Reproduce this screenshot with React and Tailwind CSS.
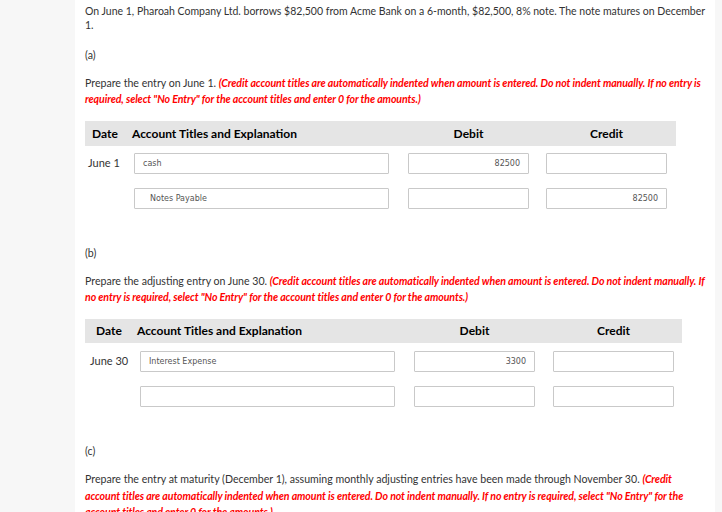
const prompt =
  '(Credit account titles are automatically indented when amount is entered. Do not indent manually. If no entry is required, select "No Entry" for the account titles and enter 0 for the amounts.)';

function Box({ value = "", width, align = "left", indent = false }) {
  return (
    <div
      className={`shrink-0 h-[21px] border border-[#c9c9c9] rounded-[1px] bg-white flex items-center text-[8px] text-[#555] ${
        align === "right" ? "justify-end pr-[8px]" : indent ? "pl-[15px]" : "pl-[8px]"
      }`}
      style={{ width, fontFamily: '"DejaVu Sans", Verdana, sans-serif' }}
    >
      {value}
    </div>
  );
}

function Journal({ t, rows }) {
  return (
    <div style={{ width: t.width }}>
      <div
        className="flex items-center bg-[#e5e5e5] font-bold text-[12px] text-black"
        style={{ height: t.headH }}
      >
        <div className="shrink-0" style={{ width: t.dateW, paddingLeft: t.datePad }}>
          Date
        </div>
        <div className="shrink-0" style={{ width: t.acctW + t.gap1, marginLeft: t.acctShift }}>
          Account Titles and Explanation
        </div>
        <div className="shrink-0 text-center" style={{ width: 121, marginLeft: -t.acctShift }}>
          Debit
        </div>
        <div className="shrink-0" style={{ width: t.gap2 }} />
        <div className="shrink-0 text-center" style={{ width: 121 }}>
          Credit
        </div>
      </div>
      <div className="flex flex-col gap-[14px]" style={{ marginTop: t.rowTop }}>
        {rows.map((r, i) => (
          <div key={i} className="flex items-center">
            <div
              className="shrink-0 text-[11px] text-[#333]"
              style={{ width: t.dateW, paddingLeft: t.dateLabelPad }}
            >
              {r.date}
            </div>
            <Box value={r.acct} indent={r.indent} width={t.acctW} />
            <div className="shrink-0" style={{ width: t.gap1 }} />
            <Box value={r.debit} align="right" width={121} />
            <div className="shrink-0" style={{ width: t.gap2 }} />
            <Box value={r.credit} align="right" width={121} />
          </div>
        ))}
      </div>
    </div>
  );
}

export default function App() {
  const t1 = {
    width: 591,
    headH: 25,
    dateW: 49,
    datePad: 7,
    dateLabelPad: 3,
    acctShift: -2,
    acctW: 255,
    gap1: 19,
    gap2: 17,
    rowTop: 7,
  };
  const t2 = {
    width: 597,
    headH: 24,
    dateW: 55,
    datePad: 11,
    dateLabelPad: 5,
    acctShift: -3,
    acctW: 255,
    gap1: 19,
    gap2: 18,
    rowTop: 8,
  };

  return (
    <div
      className="w-[722px] h-[512px] overflow-hidden bg-[#f7f7f7] flex"
      style={{ fontFamily: 'Lato, "Open Sans", sans-serif' }}
    >
      <div className="w-[75px] shrink-0" />
      <div className="w-[640px] shrink-0 bg-white pl-[10px] pt-[4px] text-[10.6px] text-[#333]">
        <p className="leading-[14px] text-[10.5px]">
          On June 1, Pharoah Company Ltd. borrows $82,500 from Acme Bank on a 6-month, $82,500, 8% note. The note matures on December 1.
        </p>
        <p className="leading-[14px] mt-[16px]">(a)</p>
        <p className="leading-[16px] mt-[13px] pr-[7px]">
          Prepare the entry on June 1.{" "}
          <span className="text-[#ff0000] font-bold italic tracking-[-0.1px]">{prompt}</span>
        </p>
        <div className="mt-[14px]">
          <Journal
            t={t1}
            rows={[
              { date: "June 1", acct: "cash", debit: "82500", credit: "" },
              { date: "", acct: "Notes Payable", indent: true, debit: "", credit: "82500" },
            ]}
          />
        </div>
        <p className="leading-[14px] mt-[37px]">(b)</p>
        <p className="leading-[15.5px] mt-[14px] pr-[7px]">
          Prepare the adjusting entry on June 30.{" "}
          <span className="text-[#ff0000] font-bold italic tracking-[-0.1px]">{prompt}</span>
        </p>
        <div className="mt-[14px]">
          <Journal
            t={t2}
            rows={[
              { date: "June 30", acct: "Interest Expense", debit: "3300", credit: "" },
              { date: "", acct: "", debit: "", credit: "" },
            ]}
          />
        </div>
        <p className="leading-[14px] mt-[37px]">(c)</p>
        <p className="leading-[16.5px] mt-[13px] pr-[7px]">
          Prepare the entry at maturity (December 1), assuming monthly adjusting entries have been made through November 30.{" "}
          <span className="text-[#ff0000] font-bold italic tracking-[-0.1px]">{prompt}</span>
        </p>
      </div>
    </div>
  );
}
